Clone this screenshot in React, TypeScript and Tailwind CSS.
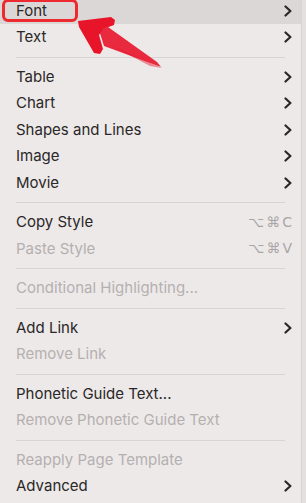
import React from 'react';

type Item =
  | { kind: 'sep' }
  | { kind: 'item'; label: string; disabled?: boolean; submenu?: boolean; shortcut?: string };

const items: Item[] = [
  { kind: 'item', label: 'Text', submenu: true },
  { kind: 'sep' },
  { kind: 'item', label: 'Table', submenu: true },
  { kind: 'item', label: 'Chart', submenu: true },
  { kind: 'item', label: 'Shapes and Lines', submenu: true },
  { kind: 'item', label: 'Image', submenu: true },
  { kind: 'item', label: 'Movie', submenu: true },
  { kind: 'sep' },
  { kind: 'item', label: 'Copy Style', shortcut: 'C' },
  { kind: 'item', label: 'Paste Style', shortcut: 'V', disabled: true },
  { kind: 'sep' },
  { kind: 'item', label: 'Conditional Highlighting...', disabled: true },
  { kind: 'sep' },
  { kind: 'item', label: 'Add Link', submenu: true },
  { kind: 'item', label: 'Remove Link', disabled: true },
  { kind: 'sep' },
  { kind: 'item', label: 'Phonetic Guide Text...' },
  { kind: 'item', label: 'Remove Phonetic Guide Text', disabled: true },
  { kind: 'sep' },
  { kind: 'item', label: 'Reapply Page Template', disabled: true },
  { kind: 'item', label: 'Advanced', submenu: true },
];

function Chevron() {
  return (
    <svg width="8" height="12" viewBox="0 0 8 12" className="shrink-0">
      <path d="M1.5 1.5 L6.4 6 L1.5 10.5" fill="none" stroke="#2a2727" strokeWidth="2.2" strokeLinecap="round" strokeLinejoin="round" />
    </svg>
  );
}

function Row({ item }: { item: Extract<Item, { kind: 'item' }> }) {
  return (
    <div className="h-[26.5px] flex items-center justify-between pl-4 pr-[9px]">
      <span className={item.disabled ? 'text-[#b5b0b0]' : 'text-[#2a2727]'}>{item.label}</span>
      {item.submenu && <Chevron />}
      {item.shortcut && (
        <span className="text-[#a9a5a5] text-[14px] font-['DejaVu_Sans',sans-serif] flex gap-[2px]">
          <span>⌥</span>
          <span>⌘</span>
          <span>{item.shortcut}</span>
        </span>
      )}
    </div>
  );
}

export default function App() {
  return (
    <div className="w-[306px] h-[503px] bg-[#e4e0e0] overflow-hidden relative font-['Inter',sans-serif] text-[15px]">
      <div className="w-[302px] h-full bg-[#ede9e9] border-r border-[#d8d4d4]">
        {/* highlighted row */}
        <div className="h-[24px] bg-[#dcd7d7] flex items-center justify-between pl-4 pr-[9px] pb-[2px]">
          <span className="text-[#2a2727]">Font</span>
          <Chevron />
        </div>
        {items.map((it, i) =>
          it.kind === 'sep' ? (
            <div key={i} className="h-[13px] flex items-center px-4">
              <div className="h-px w-full bg-[#d8d4d4]" />
            </div>
          ) : (
            <Row key={i} item={it} />
          )
        )}
      </div>

      {/* annotation */}
      <div className="absolute left-[2px] top-[-1px] w-[76px] h-[23px] border-[3px] border-[#ec2a30] rounded-[6px]" />
      <svg className="absolute left-0 top-0" width="306" height="80" viewBox="0 0 306 80">
        <path d="M78 21 L111 17 L115 20 L114 25 L103 29 L99 35 L103 49 L100 54 L94 53 L79 27 Z" fill="#e8142a" />
        <path d="M99 30 L108 27 L157 62 L161 67 L104 46 Z" fill="#e8142a" opacity="0.9" />
        <path d="M110 45 L162 68 L150 66 Z" fill="#e8142a" opacity="0.45" />
      </svg>
    </div>
  );
}
